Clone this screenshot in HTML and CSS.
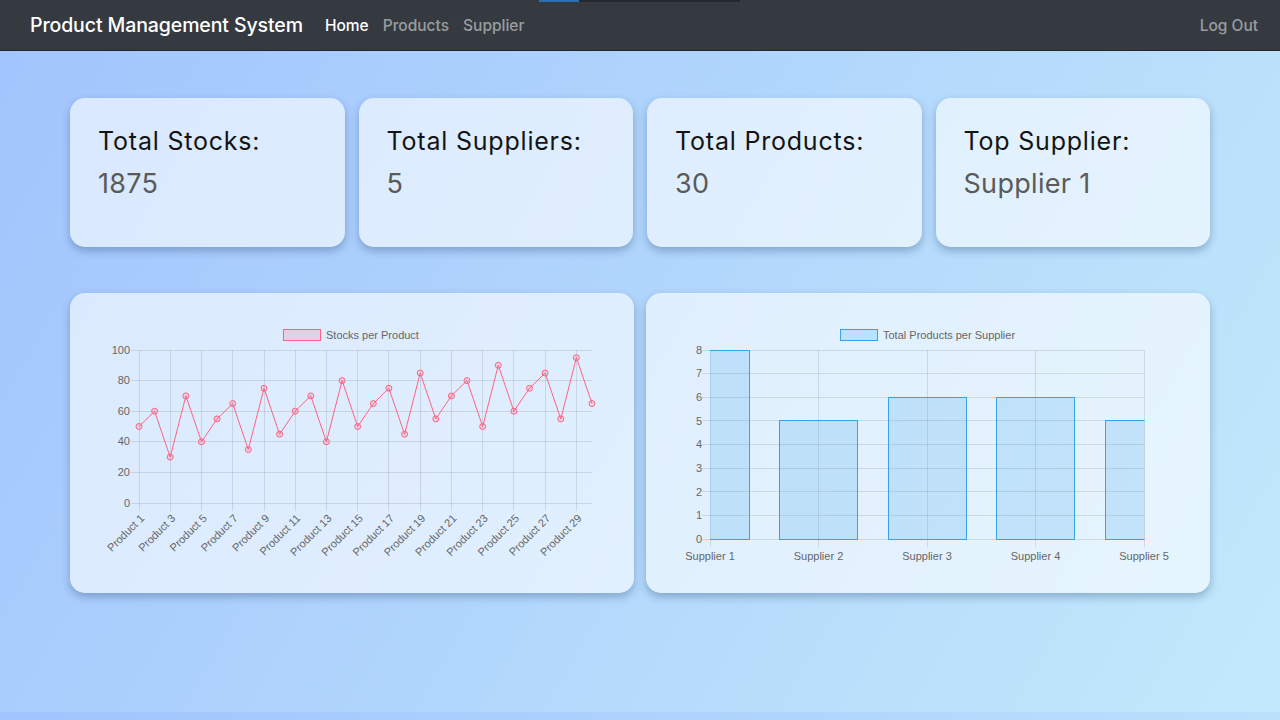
FILE: index.html
```html
<!DOCTYPE html>
<html lang="en">
<head>
<meta charset="utf-8">
<title>Product Management System</title>
<link rel="stylesheet" href="styles.css">
</head>
<body>
<nav class="navbar">
  <span class="scroll-mark"><span class="scroll-thumb"></span></span>
  <a class="brand" href="#">Product Management System</a>
  <ul class="nav-links">
    <li><a class="nav-link active" href="#">Home</a></li>
    <li><a class="nav-link" href="#">Products</a></li>
    <li><a class="nav-link" href="#">Supplier</a></li>
  </ul>
  <a class="nav-link logout" href="#">Log Out</a>
</nav>

<main class="container">
  <section class="stats">
    <div class="card stat">
      <h4 class="stat-title">Total Stocks:</h4>
      <p class="stat-value">1875</p>
    </div>
    <div class="card stat">
      <h4 class="stat-title">Total Suppliers:</h4>
      <p class="stat-value">5</p>
    </div>
    <div class="card stat">
      <h4 class="stat-title">Total Products:</h4>
      <p class="stat-value">30</p>
    </div>
    <div class="card stat">
      <h4 class="stat-title">Top Supplier:</h4>
      <p class="stat-value">Supplier 1</p>
    </div>
  </section>

  <section class="charts">
    <div class="card chart-card">
      <svg class="chart" viewBox="0 0 524 260" width="524" height="260">
        <g class="legend">
          <rect x="193.5" y="16.5" width="37" height="11" fill="rgba(255,99,132,0.2)" stroke="rgb(255,99,132)" stroke-width="1"/>
          <text x="236" y="26" class="tick">Stocks per Product</text>
        </g>
        <g class="grid">
          <line x1="41" y1="190.5" x2="502" y2="190.5"/>
          <line x1="41" y1="159.5" x2="502" y2="159.5"/>
          <line x1="41" y1="128.5" x2="502" y2="128.5"/>
          <line x1="41" y1="98.5" x2="502" y2="98.5"/>
          <line x1="41" y1="67.5" x2="502" y2="67.5"/>
          <line x1="41" y1="37.5" x2="502" y2="37.5"/>
          <line x1="49.5" y1="37" x2="49.5" y2="198"/>
          <line x1="80.5" y1="37" x2="80.5" y2="198"/>
          <line x1="111.5" y1="37" x2="111.5" y2="198"/>
          <line x1="142.5" y1="37" x2="142.5" y2="198"/>
          <line x1="174.5" y1="37" x2="174.5" y2="198"/>
          <line x1="205.5" y1="37" x2="205.5" y2="198"/>
          <line x1="236.5" y1="37" x2="236.5" y2="198"/>
          <line x1="267.5" y1="37" x2="267.5" y2="198"/>
          <line x1="298.5" y1="37" x2="298.5" y2="198"/>
          <line x1="330.5" y1="37" x2="330.5" y2="198"/>
          <line x1="361.5" y1="37" x2="361.5" y2="198"/>
          <line x1="392.5" y1="37" x2="392.5" y2="198"/>
          <line x1="423.5" y1="37" x2="423.5" y2="198"/>
          <line x1="455.5" y1="37" x2="455.5" y2="198"/>
          <line x1="486.5" y1="37" x2="486.5" y2="198"/>
        </g>
        <g class="tick" text-anchor="end">
          <text x="40" y="194">0</text>
          <text x="40" y="163">20</text>
          <text x="40" y="132">40</text>
          <text x="40" y="102">60</text>
          <text x="40" y="71">80</text>
          <text x="40" y="41">100</text>
        </g>
        <g class="tick" text-anchor="end">
          <text x="55" y="206" transform="rotate(-45 55 206)">Product 1</text>
          <text x="86.2" y="206" transform="rotate(-45 86.2 206)">Product 3</text>
          <text x="117.5" y="206" transform="rotate(-45 117.5 206)">Product 5</text>
          <text x="148.7" y="206" transform="rotate(-45 148.7 206)">Product 7</text>
          <text x="180" y="206" transform="rotate(-45 180 206)">Product 9</text>
          <text x="211.2" y="206" transform="rotate(-45 211.2 206)">Product 11</text>
          <text x="242.4" y="206" transform="rotate(-45 242.4 206)">Product 13</text>
          <text x="273.7" y="206" transform="rotate(-45 273.7 206)">Product 15</text>
          <text x="304.9" y="206" transform="rotate(-45 304.9 206)">Product 17</text>
          <text x="336.2" y="206" transform="rotate(-45 336.2 206)">Product 19</text>
          <text x="367.4" y="206" transform="rotate(-45 367.4 206)">Product 21</text>
          <text x="398.7" y="206" transform="rotate(-45 398.7 206)">Product 23</text>
          <text x="429.9" y="206" transform="rotate(-45 429.9 206)">Product 25</text>
          <text x="461.1" y="206" transform="rotate(-45 461.1 206)">Product 27</text>
          <text x="492.4" y="206" transform="rotate(-45 492.4 206)">Product 29</text>
        </g>
        <polyline class="line" points="49.0,113.5 64.6,98.2 80.2,144.1 95.9,82.9 111.5,128.8 127.1,105.9 142.7,90.6 158.3,136.5 174.0,75.3 189.6,121.2 205.2,98.2 220.8,82.9 236.4,128.8 252.1,67.6 267.7,113.5 283.3,90.6 298.9,75.3 314.6,121.2 330.2,60.0 345.8,105.9 361.4,82.9 377.0,67.6 392.7,113.5 408.3,52.3 423.9,98.2 439.5,75.3 455.1,60.0 470.8,105.9 486.4,44.7 502.0,90.6"/>
        <g class="points">
          <circle cx="49.0" cy="113.5" r="3"/>
          <circle cx="64.6" cy="98.2" r="3"/>
          <circle cx="80.2" cy="144.1" r="3"/>
          <circle cx="95.9" cy="82.9" r="3"/>
          <circle cx="111.5" cy="128.8" r="3"/>
          <circle cx="127.1" cy="105.9" r="3"/>
          <circle cx="142.7" cy="90.6" r="3"/>
          <circle cx="158.3" cy="136.5" r="3"/>
          <circle cx="174.0" cy="75.3" r="3"/>
          <circle cx="189.6" cy="121.2" r="3"/>
          <circle cx="205.2" cy="98.2" r="3"/>
          <circle cx="220.8" cy="82.9" r="3"/>
          <circle cx="236.4" cy="128.8" r="3"/>
          <circle cx="252.1" cy="67.6" r="3"/>
          <circle cx="267.7" cy="113.5" r="3"/>
          <circle cx="283.3" cy="90.6" r="3"/>
          <circle cx="298.9" cy="75.3" r="3"/>
          <circle cx="314.6" cy="121.2" r="3"/>
          <circle cx="330.2" cy="60.0" r="3"/>
          <circle cx="345.8" cy="105.9" r="3"/>
          <circle cx="361.4" cy="82.9" r="3"/>
          <circle cx="377.0" cy="67.6" r="3"/>
          <circle cx="392.7" cy="113.5" r="3"/>
          <circle cx="408.3" cy="52.3" r="3"/>
          <circle cx="423.9" cy="98.2" r="3"/>
          <circle cx="439.5" cy="75.3" r="3"/>
          <circle cx="455.1" cy="60.0" r="3"/>
          <circle cx="470.8" cy="105.9" r="3"/>
          <circle cx="486.4" cy="44.7" r="3"/>
          <circle cx="502.0" cy="90.6" r="3"/>
        </g>
      </svg>
    </div>

    <div class="card chart-card">
      <svg class="chart" viewBox="0 0 524 260" width="524" height="260">
        <defs>
          <clipPath id="plotClip"><rect x="44" y="0" width="434.5" height="227"/></clipPath>
        </defs>
        <g class="legend">
          <rect x="174.5" y="16.5" width="37" height="11" fill="rgba(54,162,235,0.2)" stroke="rgb(54,162,235)" stroke-width="1"/>
          <text x="217" y="26" class="tick">Total Products per Supplier</text>
        </g>
        <g class="grid">
          <line x1="36" y1="226.5" x2="478" y2="226.5"/>
          <line x1="36" y1="202.5" x2="478" y2="202.5"/>
          <line x1="36" y1="178.5" x2="478" y2="178.5"/>
          <line x1="36" y1="155.5" x2="478" y2="155.5"/>
          <line x1="36" y1="131.5" x2="478" y2="131.5"/>
          <line x1="36" y1="107.5" x2="478" y2="107.5"/>
          <line x1="36" y1="84.5" x2="478" y2="84.5"/>
          <line x1="36" y1="60.5" x2="478" y2="60.5"/>
          <line x1="36" y1="37.5" x2="478" y2="37.5"/>
          <line x1="44.5" y1="37" x2="44.5" y2="234"/>
          <line x1="152.5" y1="37" x2="152.5" y2="234"/>
          <line x1="261.5" y1="37" x2="261.5" y2="234"/>
          <line x1="369.5" y1="37" x2="369.5" y2="234"/>
          <line x1="478.5" y1="37" x2="478.5" y2="234"/>
        </g>
        <g class="bars" clip-path="url(#plotClip)">
          <rect x="5.5" y="37.5" width="78" height="189"/>
          <rect x="113.5" y="107.5" width="78" height="119"/>
          <rect x="222.5" y="84.5" width="78" height="142"/>
          <rect x="330.5" y="84.5" width="78" height="142"/>
          <rect x="439.5" y="107.5" width="78" height="119"/>
        </g>
        <g class="tick" text-anchor="end">
          <text x="36" y="230">0</text>
          <text x="36" y="206">1</text>
          <text x="36" y="183">2</text>
          <text x="36" y="159">3</text>
          <text x="36" y="135">4</text>
          <text x="36" y="112">5</text>
          <text x="36" y="88">6</text>
          <text x="36" y="64">7</text>
          <text x="36" y="41">8</text>
        </g>
        <g class="tick" text-anchor="middle">
          <text x="44" y="247">Supplier 1</text>
          <text x="152.5" y="247">Supplier 2</text>
          <text x="261" y="247">Supplier 3</text>
          <text x="369.5" y="247">Supplier 4</text>
          <text x="478" y="247">Supplier 5</text>
        </g>
      </svg>
    </div>
  </section>
</main>
</body>
</html>
```

FILE: styles.css
```css
* {
  box-sizing: border-box;
}

body {
  margin: 0;
  min-height: 712px;
  font-family: "Inter", "Noto Sans", sans-serif;
  background: linear-gradient(120deg, #a1c4fd 0%, #c2e9fb 100%);
  color: #212529;
}

.navbar {
  position: relative;
  display: flex;
  align-items: center;
  height: 51px;
  padding: 0 22px 0 30px;
  background: #343a40;
  border-bottom: 1px solid #23272b;
}

.scroll-mark {
  position: absolute;
  top: 0;
  left: 539px;
  width: 201px;
  height: 2px;
  background: #25292d;
}

.scroll-thumb {
  display: block;
  width: 40px;
  height: 2px;
  background: #2e6cb3;
}

.brand {
  color: #fff;
  text-decoration: none;
  font-size: 19.5px;
  font-weight: 500;
  letter-spacing: -0.1px;
  margin-right: 22px;
}

.nav-links {
  display: flex;
  gap: 14px;
  list-style: none;
  margin: 0;
  padding: 0;
}

.nav-link {
  color: rgba(255, 255, 255, 0.5);
  text-decoration: none;
  font-size: 15.5px;
  font-weight: 500;
  letter-spacing: 0;
}

.nav-link.active {
  color: #fff;
}

.logout {
  margin-left: auto;
  color: rgba(255, 255, 255, 0.5);
}

.container {
  width: 1140px;
  margin: 47px auto 0;
}

.card {
  background: rgba(255, 255, 255, 0.6);
  border-radius: 15px;
  box-shadow: 0 4px 9px rgba(20, 50, 100, 0.3);
}

.stats {
  display: grid;
  grid-template-columns: repeat(4, 1fr);
  gap: 14px;
}

.stat {
  height: 149px;
  padding: 28px 28px 0;
}

.stat-title {
  margin: 0;
  font-size: 25px;
  font-weight: 400;
  line-height: 30px;
  letter-spacing: 0.8px;
  color: #141414;
}

.stat-value {
  margin: 11px 0 0;
  font-size: 27px;
  font-weight: 400;
  line-height: 34px;
  letter-spacing: 0.3px;
  color: #5a5a5a;
}

.charts {
  display: grid;
  grid-template-columns: 1fr 1fr;
  gap: 12px;
  margin-top: 46px;
}

.chart-card {
  height: 300px;
  padding: 20px;
}

.chart {
  display: block;
}

.tick {
  font-family: "Liberation Sans", Arial, sans-serif;
  font-size: 11px;
  fill: #666;
}

.grid line {
  stroke: rgba(0, 0, 0, 0.1);
  stroke-width: 1;
}

.line {
  fill: none;
  stroke: rgb(255, 99, 132);
  stroke-width: 1;
}

.points circle {
  fill: rgba(255, 99, 132, 0.2);
  stroke: rgb(255, 99, 132);
  stroke-width: 1;
}

.bars rect {
  fill: rgba(54, 162, 235, 0.2);
  stroke: rgb(54, 162, 235);
  stroke-width: 1;
}
```
